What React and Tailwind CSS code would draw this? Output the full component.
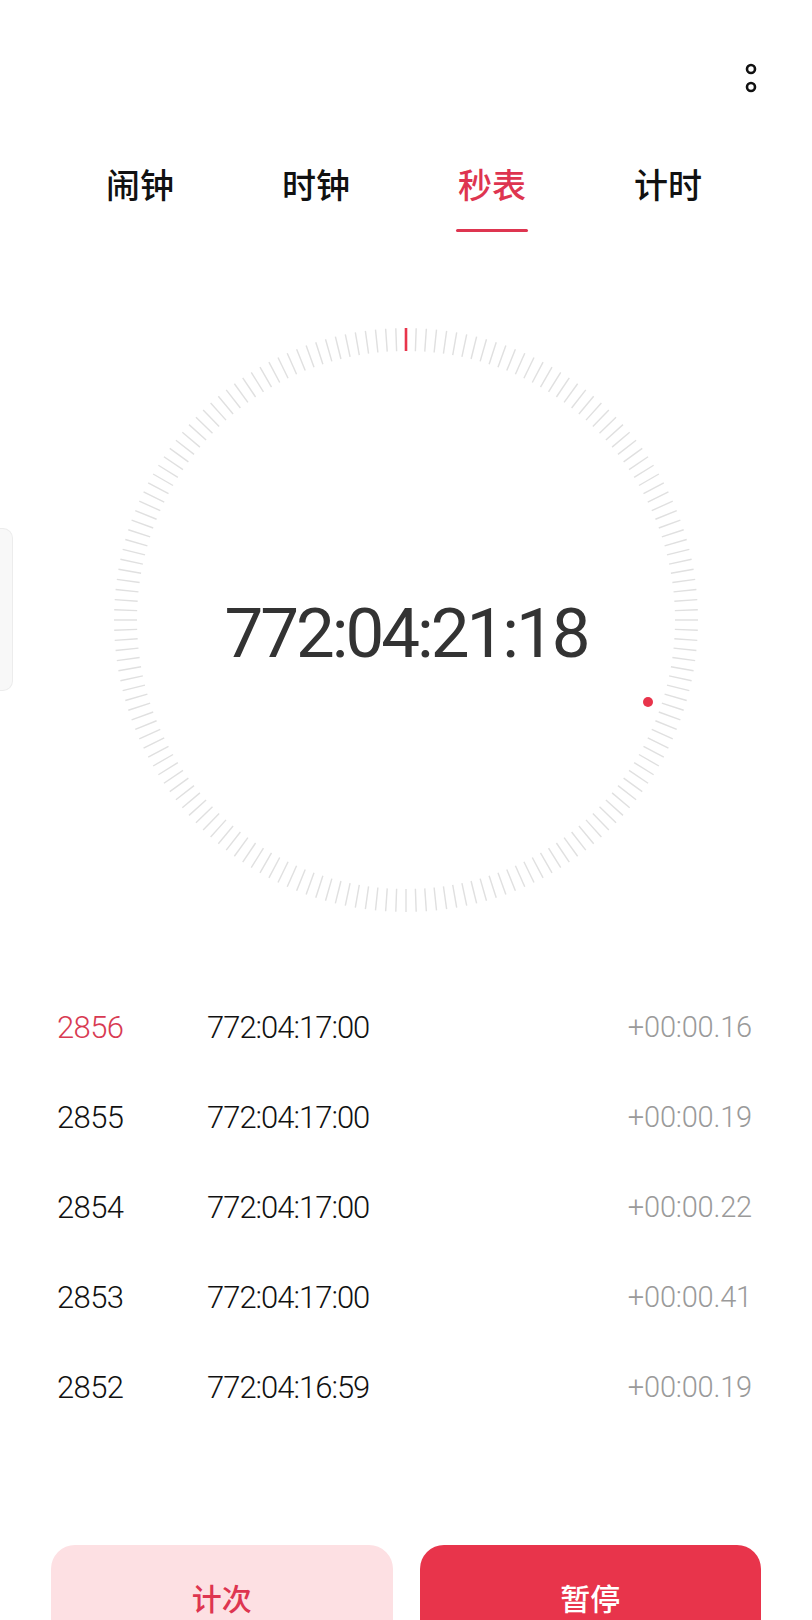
import React from 'react'

const RED = '#e8344b'

const laps = [
  { n: '2856', t: '772:04:17:00', d: '+00:00.16', current: true },
  { n: '2855', t: '772:04:17:00', d: '+00:00.19' },
  { n: '2854', t: '772:04:17:00', d: '+00:00.22' },
  { n: '2853', t: '772:04:17:00', d: '+00:00.41' },
  { n: '2852', t: '772:04:16:59', d: '+00:00.19' },
]

const tabs = ['闹钟', '时钟', '秒表', '计时']

function Dial() {
  const ticks = []
  for (let i = 0; i < 180; i++) {
    const a = (i * 2 * Math.PI) / 180
    const s = Math.sin(a)
    const c = Math.cos(a)
    ticks.push(
      <line
        key={i}
        x1={300 + 269 * s}
        y1={300 - 269 * c}
        x2={300 + 292 * s}
        y2={300 - 292 * c}
        stroke={i === 0 ? RED : '#e0e0e0'}
        strokeWidth={i === 0 ? 2.6 : 1.4}
      />
    )
  }
  return (
    <svg width="600" height="600" viewBox="0 0 600 600" className="col-start-1 row-start-1">
      {ticks}
      <circle cx="542" cy="382" r="5" fill={RED} />
    </svg>
  )
}

export default function App() {
  return (
    <div
      className="w-[812px] h-[1620px] overflow-hidden bg-white relative"
      style={{ fontFamily: 'Roboto, "Noto Sans CJK SC", sans-serif' }}
    >
      {/* side handle */}
      <div className="absolute left-0 top-[528px] w-[13px] h-[163px] rounded-r-[10px] bg-[#f8f8f8] border border-l-0 border-[#ececec]" />

      {/* menu */}
      <div className="h-[100px] flex justify-end pr-[51px] pt-[63px]">
        <svg width="20" height="30" viewBox="0 0 20 30">
          <circle cx="10" cy="6" r="4" fill="none" stroke="#111" strokeWidth="2.6" />
          <circle cx="10" cy="24" r="4" fill="none" stroke="#111" strokeWidth="2.6" />
        </svg>
      </div>

      {/* tabs */}
      <div className="mt-[62px] ml-[52px] w-[704px] grid grid-cols-4">
        {tabs.map((t, i) => (
          <div key={t} className="flex flex-col items-center">
            <span
              className={`text-[34px] leading-[44px] font-medium ${i === 2 ? 'text-[#de3550]' : 'text-[#111]'}`}
              style={{ fontFamily: '"Noto Sans CJK SC", sans-serif' }}
            >
              {t}
            </span>
            {i === 2 ? (
              <div className="mt-[23px] w-[72px] h-[3px] rounded-full bg-[#de3550]" />
            ) : (
              <div className="mt-[23px] h-[3px]" />
            )}
          </div>
        ))}
      </div>

      {/* dial */}
      <div className="mt-[88px] flex justify-center">
        <div className="grid">
          <Dial />
          <div className="col-start-1 row-start-1 flex items-center justify-center pt-[26px]">
            <span className="text-[69px] leading-none text-[#333] tracking-[-3px]">772:04:21:18</span>
          </div>
        </div>
      </div>

      {/* laps */}
      <div className="mt-[63px] pl-[57px] pr-[60px]">
        {laps.map((l) => (
          <div key={l.n} className="h-[90px] flex items-center font-light">
            <span className={`w-[150px] text-[31px] tracking-[-0.6px] ${l.current ? 'text-[#d83a52]' : 'text-[#111]'}`}>
              {l.n}
            </span>
            <span className="text-[31px] tracking-[-1px] text-[#111]">{l.t}</span>
            <span className="ml-auto text-[29px] tracking-[-0.2px] text-[#9a9a9a]">{l.d}</span>
          </div>
        ))}
      </div>

      {/* buttons */}
      <div className="mt-[112px] px-[51px] grid grid-cols-2 gap-[27px]">
        <div
          className="h-[104px] rounded-[24px] bg-[#fde0e3] flex items-center justify-center text-[30px] font-medium text-[#de3550]"
          style={{ fontFamily: '"Noto Sans CJK SC", sans-serif' }}
        >
          计次
        </div>
        <div
          className="h-[104px] rounded-[24px] bg-[#e8344b] flex items-center justify-center text-[30px] font-medium text-white"
          style={{ fontFamily: '"Noto Sans CJK SC", sans-serif' }}
        >
          暂停
        </div>
      </div>
    </div>
  )
}
